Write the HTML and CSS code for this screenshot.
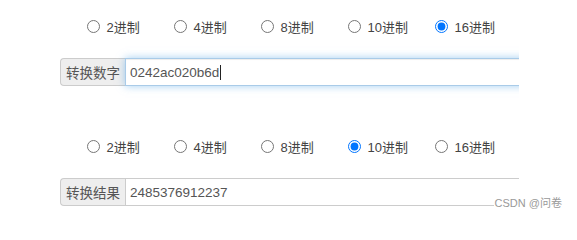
FILE: index.html
```html
<!DOCTYPE html>
<html lang="zh">
<head>
<meta charset="utf-8">
<title>进制转换</title>
<link rel="stylesheet" href="styles.css">
</head>
<body>
<div class="page">
  <section class="block">
    <div class="radios">
      <label class="opt"><input type="radio" name="from"> 2进制</label>
      <label class="opt"><input type="radio" name="from"> 4进制</label>
      <label class="opt"><input type="radio" name="from"> 8进制</label>
      <label class="opt"><input type="radio" name="from"> 10进制</label>
      <label class="opt"><input type="radio" name="from" checked> 16进制</label>
    </div>
    <div class="clip">
      <div class="input-group">
        <span class="addon">转换数字</span>
        <div class="field focused"><span>0242ac020b6d</span><span class="caret"></span></div>
      </div>
    </div>
  </section>
  <section class="block">
    <div class="radios">
      <label class="opt"><input type="radio" name="to"> 2进制</label>
      <label class="opt"><input type="radio" name="to"> 4进制</label>
      <label class="opt"><input type="radio" name="to"> 8进制</label>
      <label class="opt"><input type="radio" name="to" checked> 10进制</label>
      <label class="opt"><input type="radio" name="to"> 16进制</label>
    </div>
    <div class="clip">
      <div class="input-group">
        <span class="addon">转换结果</span>
        <div class="field"><span>2485376912237</span></div>
      </div>
    </div>
  </section>
  <div class="watermark">CSDN @问卷</div>
</div>
</body>
</html>
```
FILE: styles.css
```css
html, body {
  margin: 0;
  padding: 0;
  background: #fff;
}
body {
  font-family: "Liberation Sans", "Noto Sans CJK SC", sans-serif;
  color: #333;
}
.page {
  position: relative;
  width: 577px;
  height: 218px;
  overflow: hidden;
}
.block {
  padding: 16px 0 0 60px;
  height: 104px;
}
.radios {
  display: grid;
  grid-template-columns: repeat(5, 87px);
  padding-left: 21px;
  height: 20px;
  align-items: center;
  font-size: 13px;
  color: #444;
}
.opt {
  display: flex;
  align-items: center;
  white-space: pre;
  cursor: pointer;
}
.opt input {
  margin: 0 3px 0 6px;
  width: 13px;
  height: 13px;
}
.clip {
  margin-top: 22px;
  width: 459px;
  clip-path: inset(-12px 0 -12px -12px);
}
.input-group {
  display: flex;
  width: 490px;
  height: 28px;
  font-size: 13.5px;
  color: #555;
}
.addon {
  display: flex;
  align-items: center;
  padding: 0 5px;
  background: #eee;
  border: 1px solid #ccc;
  border-right: 0;
  border-radius: 4px 0 0 4px;
}
.field {
  flex: 1;
  display: flex;
  align-items: center;
  padding: 0 4px;
  border: 1px solid #ccc;
  background: #fff;
}
.field.focused {
  border-color: #a9cbe8;
  box-shadow: inset 0 1px 1px rgba(0,0,0,.075), 0 0 8px rgba(102,175,233,.6);
}
.caret {
  display: inline-block;
  width: 1px;
  height: 15px;
  background: #222;
  margin-left: 1px;
}
.watermark {
  position: absolute;
  right: 14px;
  bottom: 8px;
  padding: 0 1px;
  font-size: 11px;
  color: #999;
  background: #fff;
  line-height: 13px;
}
```
